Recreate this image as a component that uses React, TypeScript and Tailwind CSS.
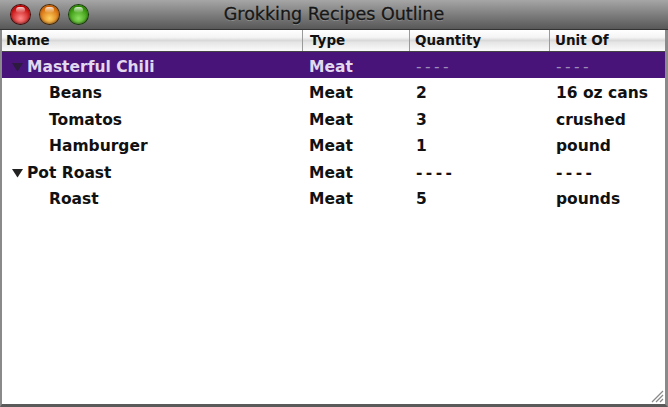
import React from "react";

type Row = { name: string; level: 0 | 1; qty: string; unit: string; selected?: boolean };

const rows: Row[] = [
  { name: "Masterful Chili", level: 0, qty: "----", unit: "----", selected: true },
  { name: "Beans", level: 1, qty: "2", unit: "16 oz cans" },
  { name: "Tomatos", level: 1, qty: "3", unit: "crushed" },
  { name: "Hamburger", level: 1, qty: "1", unit: "pound" },
  { name: "Pot Roast", level: 0, qty: "----", unit: "----" },
  { name: "Roast", level: 1, qty: "5", unit: "pounds" },
];

function Light({ from, to, ring }: { from: string; to: string; ring: string }) {
  return (
    <div
      className="w-[19px] h-[19px] rounded-full relative"
      style={{
        background: `radial-gradient(circle at 50% 70%, ${from} 0%, ${to} 75%)`,
        boxShadow: `0 0 0 1px ${ring}, inset 0 -1px 2px rgba(0,0,0,0.35)`,
      }}
    >
      <div className="absolute left-[5px] top-[2px] w-[9px] h-[6px] rounded-full bg-gradient-to-b from-white/80 to-white/0" />
    </div>
  );
}

function Triangle({ color }: { color: string }) {
  return (
    <svg width="11" height="9" viewBox="0 0 11 9" className="shrink-0">
      <polygon points="0,0 11,0 5.5,8.5" fill={color} />
    </svg>
  );
}

function Dashes({ light }: { light?: boolean }) {
  return (
    <span className={`tracking-[3.4px] ${light ? "text-[#9d8fb5] font-normal" : ""}`}>----</span>
  );
}

export default function App() {
  return (
    <div
      className="w-[668px] h-[407px] flex flex-col bg-[#7a7a7a] overflow-hidden"
      style={{ fontFamily: '"DejaVu Sans", "Liberation Sans", sans-serif' }}
    >
      {/* title bar */}
      <div className="h-[30px] shrink-0 relative flex items-center bg-gradient-to-b from-[#a6a6a6] via-[#7e7e7e] to-[#585858] border-b border-[#333]">
        <div className="flex items-center gap-[10px] pl-[11px]">
          <Light from="#ff8a8a" to="#c00000" ring="#4a0c0c" />
          <Light from="#ffd060" to="#d06000" ring="#4a2800" />
          <Light from="#8be060" to="#2a8a00" ring="#173f0a" />
        </div>
        <div
          className="absolute inset-0 flex items-center justify-center text-[17.5px] text-[#161616] pb-[1px]"
          style={{ textShadow: "0 1px 0 rgba(255,255,255,0.25)", WebkitTextStroke: "0.3px #161616" }}
        >
          Grokking Recipes Outline
        </div>
      </div>

      {/* content */}
      <div className="flex-1 flex flex-col bg-white border-l-2 border-l-[#8a8a8a] border-r-[3px] border-r-[#8a8a8a] border-b-[3px] border-b-[#5a5a5a] relative">
        {/* header */}
        <div className="h-[22px] shrink-0 flex text-[13.5px] font-bold text-[#111] bg-[linear-gradient(to_bottom,#ffffff_0%,#f4f4f4_35%,#d9d9d9_50%,#e6e6e6_60%,#fbfbfb_100%)] border-b border-[#444]">
          <div className="w-[301px] pl-[4px] flex items-center border-r border-[#9a9a9a]">Name</div>
          <div className="w-[107px] pl-[7px] flex items-center border-r border-[#9a9a9a]">Type</div>
          <div className="w-[140px] pl-[5px] flex items-center border-r border-[#9a9a9a]">Quantity</div>
          <div className="flex-1 pl-[5px] flex items-center">Unit Of</div>
        </div>

        {/* rows */}
        <div className="flex flex-col text-[15.5px] font-bold">
          {rows.map((r, i) => (
            <div
              key={i}
              className={`h-[26.4px] pt-[5px] flex items-center ${r.selected ? "bg-[#48147a] text-[#e2d9ef]" : "text-[#111]"}`}
            >
              <div className="w-[301px] flex items-center">
                {r.level === 0 ? (
                  <div className="flex items-center pl-[10px] gap-[4px]">
                    <Triangle color={r.selected ? "#2c1a40" : "#222"} />
                    <span>{r.name}</span>
                  </div>
                ) : (
                  <span className="pl-[47px]">{r.name}</span>
                )}
              </div>
              <div className="w-[107px] pl-[6px]">Meat</div>
              <div className="w-[140px] pl-[6px]">
                {r.qty === "----" ? <Dashes light={r.selected} /> : r.qty}
              </div>
              <div className="flex-1 pl-[6px] whitespace-nowrap">
                {r.unit === "----" ? <Dashes light={r.selected} /> : r.unit}
              </div>
            </div>
          ))}
        </div>

        {/* resize grip */}
        <svg
          width="14"
          height="14"
          viewBox="0 0 14 14"
          className="absolute right-[1px] bottom-[1px]"
        >
          <line x1="13" y1="2" x2="2" y2="13" stroke="#8a8a8a" strokeWidth="1.2" />
          <line x1="13" y1="6" x2="6" y2="13" stroke="#8a8a8a" strokeWidth="1.2" />
          <line x1="13" y1="10" x2="10" y2="13" stroke="#8a8a8a" strokeWidth="1.2" />
        </svg>
      </div>
    </div>
  );
}
